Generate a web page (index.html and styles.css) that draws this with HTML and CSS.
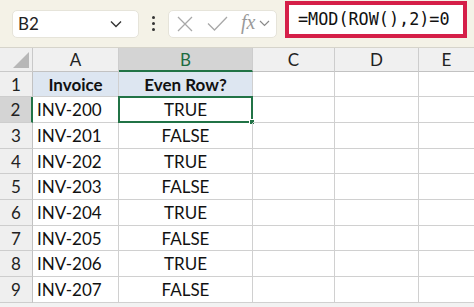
FILE: index.html
```html
<!DOCTYPE html>
<html>
<head>
<meta charset="utf-8">
<link rel="stylesheet" href="styles.css">
</head>
<body>
<div class="toolbar">
  <div class="namebox">
    <span class="ref">B2</span>
    <svg class="chev" width="12" height="8" viewBox="0 0 12 8"><path d="M1 1.5 L6 6.5 L11 1.5" fill="none" stroke="#333" stroke-width="1.4"/></svg>
  </div>
  <div class="dots"><i></i><i></i><i></i></div>
  <div class="fxbox">
    <svg class="ic-x" width="16" height="16" viewBox="0 0 16 16"><path d="M1 1 L15 15 M15 1 L1 15" stroke="#a8a8a8" stroke-width="1.3" fill="none"/></svg>
    <svg class="ic-check" width="21" height="15" viewBox="0 0 21 15"><path d="M1 7.5 L7.5 14 L20 1" stroke="#a8a8a8" stroke-width="1.3" fill="none"/></svg>
    <span class="fx">fx</span>
    <svg class="ic-chev" width="11" height="7" viewBox="0 0 11 7"><path d="M1 1 L5.5 5.5 L10 1" fill="none" stroke="#8a8a8a" stroke-width="1.2"/></svg>
  </div>
  <div class="formula">=MOD(ROW(),2)=0</div>
</div>
<div class="sheet">
  <div class="corner"><span class="tri"></span></div>
  <div class="colhd">A</div>
  <div class="colhd sel">B</div>
  <div class="colhd">C</div>
  <div class="colhd">D</div>
  <div class="colhd last">E</div>

  <div class="rowhd">1</div>
  <div class="cell head">Invoice</div>
  <div class="cell head">Even Row?</div>
  <div class="cell"></div><div class="cell"></div><div class="cell last"></div>

  <div class="rowhd sel">2</div>
  <div class="cell txt">INV-200</div>
  <div class="cell ctr active">TRUE<span class="handle"></span></div>
  <div class="cell"></div><div class="cell"></div><div class="cell last"></div>

  <div class="rowhd">3</div>
  <div class="cell txt">INV-201</div>
  <div class="cell ctr">FALSE</div>
  <div class="cell"></div><div class="cell"></div><div class="cell last"></div>

  <div class="rowhd">4</div>
  <div class="cell txt">INV-202</div>
  <div class="cell ctr">TRUE</div>
  <div class="cell"></div><div class="cell"></div><div class="cell last"></div>

  <div class="rowhd">5</div>
  <div class="cell txt">INV-203</div>
  <div class="cell ctr">FALSE</div>
  <div class="cell"></div><div class="cell"></div><div class="cell last"></div>

  <div class="rowhd">6</div>
  <div class="cell txt">INV-204</div>
  <div class="cell ctr">TRUE</div>
  <div class="cell"></div><div class="cell"></div><div class="cell last"></div>

  <div class="rowhd">7</div>
  <div class="cell txt">INV-205</div>
  <div class="cell ctr">FALSE</div>
  <div class="cell"></div><div class="cell"></div><div class="cell last"></div>

  <div class="rowhd">8</div>
  <div class="cell txt">INV-206</div>
  <div class="cell ctr">TRUE</div>
  <div class="cell"></div><div class="cell"></div><div class="cell last"></div>

  <div class="rowhd">9</div>
  <div class="cell txt">INV-207</div>
  <div class="cell ctr">FALSE</div>
  <div class="cell"></div><div class="cell"></div><div class="cell last"></div>
</div>
</body>
</html>
```

FILE: styles.css
```css
* { box-sizing: border-box; }
html, body { margin: 0; padding: 0; }
body {
  width: 474px;
  height: 307px;
  overflow: hidden;
  background: #f2f2f2;
  font-family: Lato, "Open Sans", sans-serif;
  color: #111;
}
.toolbar {
  height: 48px;
  background: #f4f2e7;
  border-bottom: 1px solid #d6d4cb;
  display: flex;
  align-items: center;
  padding-left: 12px;
}
.namebox {
  width: 127px;
  height: 28px;
  background: #fff;
  border: 1px solid #e6e4da;
  border-radius: 5px;
  display: flex;
  align-items: center;
  justify-content: space-between;
  padding: 0 16px 0 5px;
}
.namebox .ref { font-size: 17px; color: #222; }
.dots {
  width: 29px;
  display: flex;
  flex-direction: column;
  align-items: center;
  gap: 3px;
}
.dots i { display: block; width: 3px; height: 3px; background: #333; border-radius: 50%; }
.fxbox {
  width: 109px;
  height: 28px;
  background: #fff;
  border: 1px solid #e6e4da;
  border-radius: 5px;
  display: flex;
  align-items: center;
  padding-left: 8px;
}
.ic-x { margin-right: 14px; }
.ic-check { margin-right: 13px; }
.fx {
  font-family: "Liberation Serif", serif;
  font-style: italic;
  font-size: 20px;
  color: #9a9a9a;
  margin-right: 4px;
  margin-top: -3px;
}
.formula {
  margin-left: 8px;
  width: 182px;
  height: 37px;
  margin-top: -9px;
  border: 4px solid #d51f48;
  background: #fff;
  font-family: "DejaVu Sans Mono", monospace;
  font-size: 16.8px;
  color: #111;
  display: flex;
  align-items: center;
  padding-left: 9px;
}
.sheet {
  display: grid;
  grid-template-columns: 33px 86px 134px 82px 84px 55px;
  grid-template-rows: 24px 25px 26px 26px 25px 26px 26px 25px 26px 26px;
  background: #fff;
}
.corner {
  background: #efefef;
  border-right: 1px solid #c9c9c9;
  border-bottom: 1px solid #c9c9c9;
  position: relative;
}
.tri {
  position: absolute;
  right: 3px;
  bottom: 3px;
  width: 0;
  height: 0;
  border-left: 16px solid transparent;
  border-bottom: 16px solid #b7b7b7;
}
.colhd {
  background: #f0f0f0;
  border-right: 1px solid #cdcdcd;
  border-bottom: 1px solid #c2c2c2;
  display: flex;
  align-items: center;
  justify-content: center;
  font-size: 17px;
  color: #222;
}
.colhd.sel {
  background: #d4d4d4;
  color: #1e6b41;
  border-bottom: 2px solid #217346;
}
.colhd.last, .cell.last { border-right: none; }
.rowhd {
  background: #efefef;
  border-right: 1px solid #c2c2c2;
  border-bottom: 1px solid #cdcdcd;
  display: flex;
  align-items: center;
  justify-content: center;
  font-size: 17px;
  color: #222;
}
.rowhd.sel {
  background: #d4d4d4;
  border-right: 2px solid #217346;
}
.cell {
  border-right: 1px solid #d0d0d0;
  border-bottom: 1px solid #d0d0d0;
  display: flex;
  align-items: center;
  font-size: 17px;
  color: #111;
  position: relative;
}
.cell.head {
  background: #dde6f1;
  font-weight: bold;
  justify-content: center;
}
.cell.txt { padding-left: 4px; }
.cell.ctr { justify-content: center; }
.cell.active {
  border: 2px solid #217346;
  margin: -1px 0 0 -1px;
}
.handle {
  position: absolute;
  right: -4px;
  bottom: -4px;
  width: 6px;
  height: 6px;
  background: #217346;
  border: 1px solid #fff;
}
```
